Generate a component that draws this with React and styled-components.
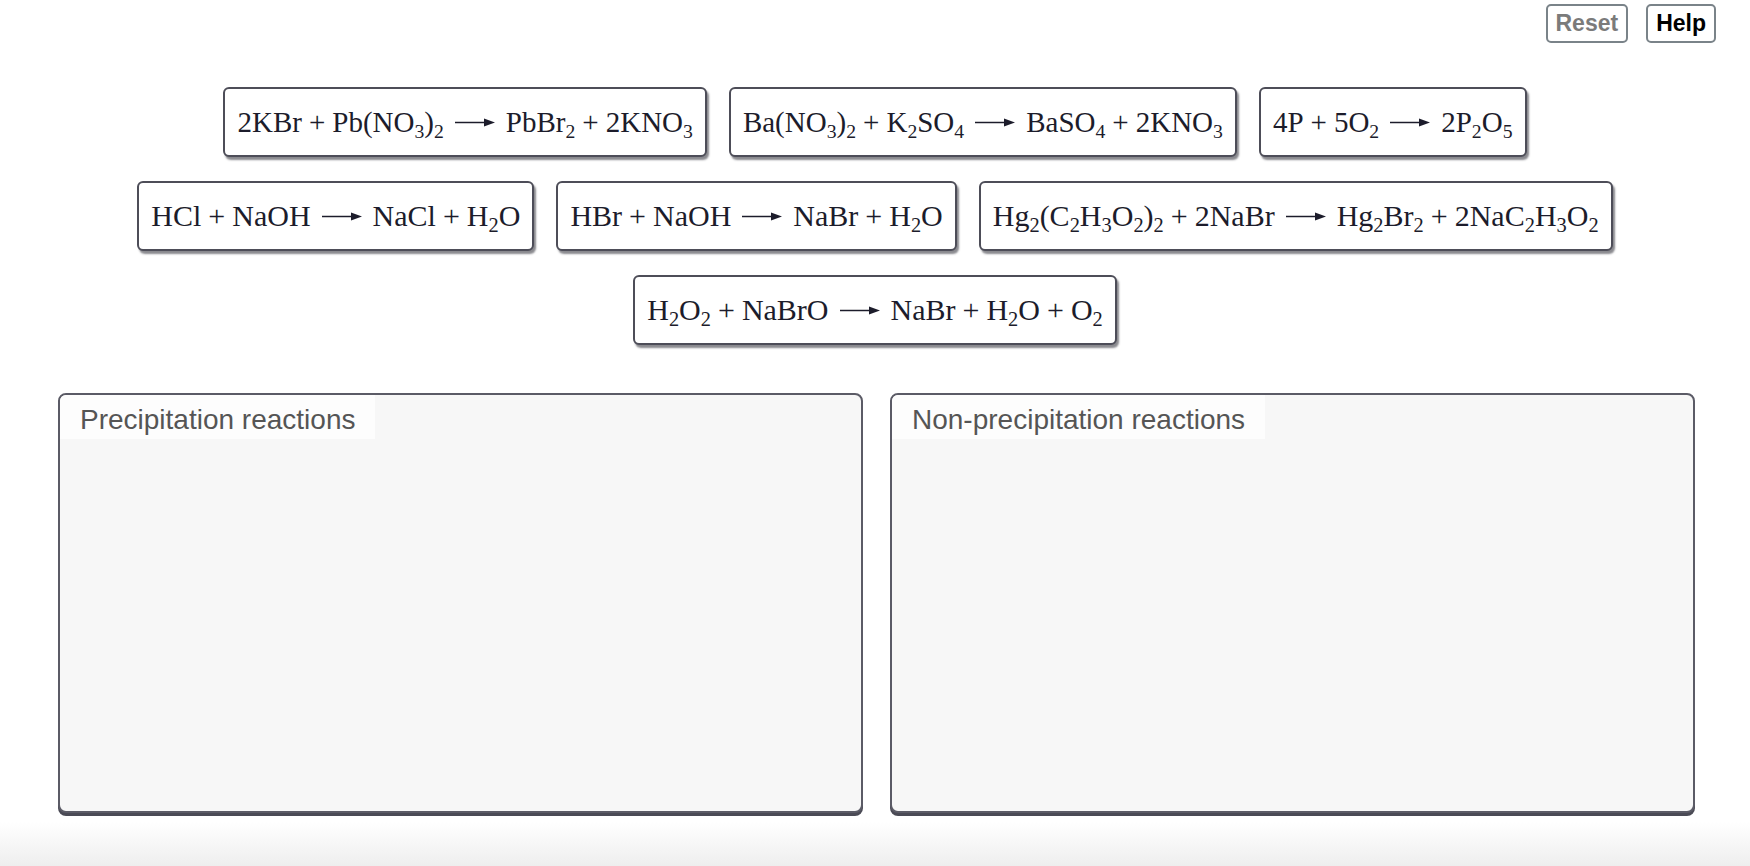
import React from 'react'
import styled, { createGlobalStyle } from 'styled-components'

const GlobalStyle = createGlobalStyle`
  html, body {
    margin: 0;
    padding: 0;
    background: #fff;
  }
  body {
    font-family: "Liberation Sans", Arial, sans-serif;
  }
`

const Page = styled.div`
  width: 1750px;
  height: 866px;
  display: flex;
  flex-direction: column;
  background: linear-gradient(to bottom, #fff 0, #fff 822px, #eeeeee 866px);
  overflow: hidden;
`

const Toolbar = styled.div`
  display: flex;
  justify-content: flex-end;
  gap: 18px;
  padding: 4px 34px 0 0;
`

const ToolButton = styled.button`
  height: 39px;
  padding: 0 8px;
  border: 2px solid #7a8389;
  border-radius: 5px;
  background: #fff;
  font-family: "Liberation Sans", Arial, sans-serif;
  font-weight: bold;
  font-size: 23px;
  color: ${p => (p.$muted ? '#7b7b7b' : '#000')};
  cursor: pointer;
`

const Bank = styled.div`
  display: flex;
  flex-direction: column;
  align-items: center;
  gap: 24px;
  margin-top: 44px;
`

const Row = styled.div`
  display: flex;
  justify-content: center;
  gap: 22px;
`

const Card = styled.div`
  height: 70px;
  box-sizing: border-box;
  display: flex;
  align-items: center;
  padding: 0 12px;
  background: #fff;
  border: 2px solid #4d4d58;
  border-radius: 6px;
  box-shadow: 2px 3px 2px rgba(40, 40, 50, 0.55);
  font-family: "Liberation Serif", "Times New Roman", serif;
  font-size: ${p => p.$size}px;
  color: #1c1c2b;
  white-space: nowrap;
  cursor: grab;
`

const Sub = styled.sub`
  font-size: 0.68em;
  vertical-align: -0.28em;
  line-height: 0;
`

const Plus = styled.span`
  margin: 0 7px;
`

const Arrow = styled.svg`
  margin: 0 11px;
  width: 40px;
  height: 11px;
`

const Zones = styled.div`
  display: flex;
  gap: 27px;
  padding: 0 55px 0 58px;
  margin-top: 48px;
`

const Zone = styled.div`
  flex: 1;
  height: 420px;
  box-sizing: border-box;
  background: #f7f7f7;
  border: 2px solid #5b5b66;
  border-radius: 8px;
  box-shadow: 0 3px 0 #4a4a55;
  display: flex;
  flex-direction: column;
  align-items: flex-start;
`

const ZoneLabel = styled.div`
  height: 44px;
  display: flex;
  align-items: center;
  padding: 6px 20px 0;
  box-sizing: border-box;
  background: #fdfdfd;
  border-top-left-radius: 6px;
  font-size: 28px;
  color: #555;
`

const rows = [
  {
    size: 29,
    items: ['2KBr + Pb(NO_3)_2 -> PbBr_2 + 2KNO_3', 'Ba(NO_3)_2 + K_2SO_4 -> BaSO_4 + 2KNO_3', '4P + 5O_2 -> 2P_2O_5'],
  },
  {
    size: 30,
    items: ['HCl + NaOH -> NaCl + H_2O', 'HBr + NaOH -> NaBr + H_2O', 'Hg_2(C_2H_3O_2)_2 + 2NaBr -> Hg_2Br_2 + 2NaC_2H_3O_2'],
  },
  { size: 30, items: ['H_2O_2 + NaBrO -> NaBr + H_2O + O_2'] },
]

// turns "K_2SO_4" into text with subscripts
const formula = (s, key) => {
  const parts = []
  let buf = ''
  for (let i = 0; i < s.length; i++) {
    if (s[i] === '_') {
      if (buf) parts.push(buf)
      buf = ''
      parts.push(<Sub key={i}>{s[i + 1]}</Sub>)
      i++
    } else buf += s[i]
  }
  if (buf) parts.push(buf)
  return <span key={key}>{parts}</span>
}

const Equation = ({ text, size }) => {
  const tokens = text.split(' ')
  return (
    <Card $size={size}>
      {tokens.map((t, i) => {
        if (t === '+') return <Plus key={i}>+</Plus>
        if (t === '->')
          return (
            <Arrow key={i} viewBox="0 0 40 11">
              <line x1="0" y1="5.5" x2="31" y2="5.5" stroke="#1c1c2b" strokeWidth="1.5" />
              <polygon points="29,1.5 40,5.5 29,9.5" fill="#1c1c2b" />
            </Arrow>
          )
        return formula(t, i)
      })}
    </Card>
  )
}

export default function App() {
  return (
    <Page>
      <GlobalStyle />
      <Toolbar>
        <ToolButton $muted>Reset</ToolButton>
        <ToolButton>Help</ToolButton>
      </Toolbar>
      <Bank>
        {rows.map((r, i) => (
          <Row key={i}>
            {r.items.map(eq => (
              <Equation key={eq} text={eq} size={r.size} />
            ))}
          </Row>
        ))}
      </Bank>
      <Zones>
        <Zone>
          <ZoneLabel>Precipitation reactions</ZoneLabel>
        </Zone>
        <Zone>
          <ZoneLabel>Non-precipitation reactions</ZoneLabel>
        </Zone>
      </Zones>
    </Page>
  )
}
